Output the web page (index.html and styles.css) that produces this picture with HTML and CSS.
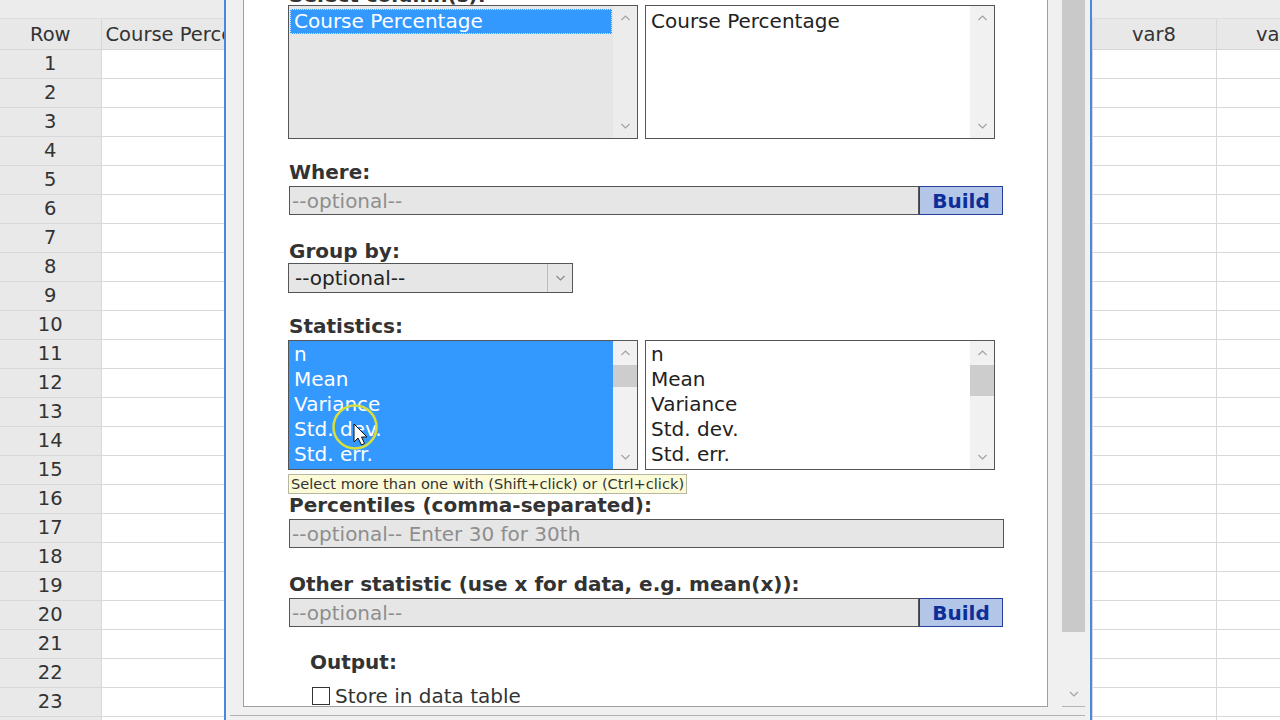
FILE: index.html
```html
<!DOCTYPE html>
<html lang="en">
<head>
    <meta charset="UTF-8">
    <title>Summary statistics</title>
    <link rel="stylesheet" href="styles.css">
</head>
<body>

    <!-- data sheet behind the dialog -->
    <div class="sheet">
        <div class="sheet-bar"></div>
        <table class="grid">
            <colgroup>
                <col class="col-row">
                <col class="col-data">
                <col class="col-hid"><col class="col-hid"><col class="col-hid">
                <col class="col-hid"><col class="col-hid"><col class="col-hid">
                <col class="col-data">
                <col class="col-data">
            </colgroup>
            <thead>
                <tr><th>Row</th><th>Course Percentage</th><th>var2</th><th>var3</th><th>var4</th><th>var5</th><th>var6</th><th>var7</th><th>var8</th><th>var9</th></tr>
            </thead>
            <tbody>
                <tr><th>1</th><td></td><td></td><td></td><td></td><td></td><td></td><td></td><td></td><td></td></tr>
                <tr><th>2</th><td></td><td></td><td></td><td></td><td></td><td></td><td></td><td></td><td></td></tr>
                <tr><th>3</th><td></td><td></td><td></td><td></td><td></td><td></td><td></td><td></td><td></td></tr>
                <tr><th>4</th><td></td><td></td><td></td><td></td><td></td><td></td><td></td><td></td><td></td></tr>
                <tr><th>5</th><td></td><td></td><td></td><td></td><td></td><td></td><td></td><td></td><td></td></tr>
                <tr><th>6</th><td></td><td></td><td></td><td></td><td></td><td></td><td></td><td></td><td></td></tr>
                <tr><th>7</th><td></td><td></td><td></td><td></td><td></td><td></td><td></td><td></td><td></td></tr>
                <tr><th>8</th><td></td><td></td><td></td><td></td><td></td><td></td><td></td><td></td><td></td></tr>
                <tr><th>9</th><td></td><td></td><td></td><td></td><td></td><td></td><td></td><td></td><td></td></tr>
                <tr><th>10</th><td></td><td></td><td></td><td></td><td></td><td></td><td></td><td></td><td></td></tr>
                <tr><th>11</th><td></td><td></td><td></td><td></td><td></td><td></td><td></td><td></td><td></td></tr>
                <tr><th>12</th><td></td><td></td><td></td><td></td><td></td><td></td><td></td><td></td><td></td></tr>
                <tr><th>13</th><td></td><td></td><td></td><td></td><td></td><td></td><td></td><td></td><td></td></tr>
                <tr><th>14</th><td></td><td></td><td></td><td></td><td></td><td></td><td></td><td></td><td></td></tr>
                <tr><th>15</th><td></td><td></td><td></td><td></td><td></td><td></td><td></td><td></td><td></td></tr>
                <tr><th>16</th><td></td><td></td><td></td><td></td><td></td><td></td><td></td><td></td><td></td></tr>
                <tr><th>17</th><td></td><td></td><td></td><td></td><td></td><td></td><td></td><td></td><td></td></tr>
                <tr><th>18</th><td></td><td></td><td></td><td></td><td></td><td></td><td></td><td></td><td></td></tr>
                <tr><th>19</th><td></td><td></td><td></td><td></td><td></td><td></td><td></td><td></td><td></td></tr>
                <tr><th>20</th><td></td><td></td><td></td><td></td><td></td><td></td><td></td><td></td><td></td></tr>
                <tr><th>21</th><td></td><td></td><td></td><td></td><td></td><td></td><td></td><td></td><td></td></tr>
                <tr><th>22</th><td></td><td></td><td></td><td></td><td></td><td></td><td></td><td></td><td></td></tr>
                <tr><th>23</th><td></td><td></td><td></td><td></td><td></td><td></td><td></td><td></td><td></td></tr>
                <tr><th>24</th><td></td><td></td><td></td><td></td><td></td><td></td><td></td><td></td><td></td></tr>
            </tbody>
        </table>
    </div>

    <!-- Summary statistics dialog (scrolled down a bit) -->
    <div class="dialog">
        <div class="dialog-body">
            <div class="panel">
                <div class="form">

                    <div class="field field-first">
                        <div class="label">Select column(s):</div>
                        <div class="list-pair">
                            <div class="listbox listbox-off">
                                <div class="list-items list-pad">
                                    <div class="opt opt-sel opt-focus">Course Percentage</div>
                                </div>
                                <div class="list-scroll">
                                    <div class="scroll-btn"><svg width="9" height="6" viewBox="0 0 9 6"><polyline points="0.5,5 4.5,1 8.5,5"/></svg></div>
                                    <div class="scroll-fill"></div>
                                    <div class="scroll-btn"><svg width="9" height="6" viewBox="0 0 9 6"><polyline points="0.5,1 4.5,5 8.5,1"/></svg></div>
                                </div>
                            </div>
                            <div class="listbox">
                                <div class="list-items list-pad">
                                    <div class="opt">Course Percentage</div>
                                </div>
                                <div class="list-scroll">
                                    <div class="scroll-btn"><svg width="9" height="6" viewBox="0 0 9 6"><polyline points="0.5,5 4.5,1 8.5,5"/></svg></div>
                                    <div class="scroll-fill"></div>
                                    <div class="scroll-btn"><svg width="9" height="6" viewBox="0 0 9 6"><polyline points="0.5,1 4.5,5 8.5,1"/></svg></div>
                                </div>
                            </div>
                        </div>
                    </div>

                    <div class="field">
                        <div class="label">Where:</div>
                        <div class="input-row">
                            <input class="input input-short" placeholder="--optional--">
                            <button class="build">Build</button>
                        </div>
                    </div>

                    <div class="field field-group">
                        <div class="label">Group by:</div>
                        <div class="select">
                            <span class="select-text">--optional--</span>
                            <span class="select-arrow"><svg width="9" height="6" viewBox="0 0 9 6"><polyline points="0.5,1 4.5,5 8.5,1"/></svg></span>
                        </div>
                    </div>

                    <div class="field field-stats">
                        <div class="label">Statistics:</div>
                        <div class="list-pair">
                            <div class="listbox listbox-stats listbox-sel">
                                <div class="list-items">
                                    <div class="opt">n</div>
                                    <div class="opt">Mean</div>
                                    <div class="opt">Variance</div>
                                    <div class="opt">Std. dev.</div>
                                    <div class="opt">Std. err.</div>
                                    <div class="opt">Median</div>
                                    <div class="opt">Range</div>
                                </div>
                                <div class="list-scroll">
                                    <div class="scroll-btn"><svg width="9" height="6" viewBox="0 0 9 6"><polyline points="0.5,5 4.5,1 8.5,5"/></svg></div>
                                    <div class="scroll-thumb"></div>
                                    <div class="scroll-fill"></div>
                                    <div class="scroll-btn"><svg width="9" height="6" viewBox="0 0 9 6"><polyline points="0.5,1 4.5,5 8.5,1"/></svg></div>
                                </div>
                            </div>
                            <div class="listbox listbox-stats">
                                <div class="list-items">
                                    <div class="opt">n</div>
                                    <div class="opt">Mean</div>
                                    <div class="opt">Variance</div>
                                    <div class="opt">Std. dev.</div>
                                    <div class="opt">Std. err.</div>
                                    <div class="opt">Median</div>
                                    <div class="opt">Range</div>
                                </div>
                                <div class="list-scroll">
                                    <div class="scroll-btn"><svg width="9" height="6" viewBox="0 0 9 6"><polyline points="0.5,5 4.5,1 8.5,5"/></svg></div>
                                    <div class="scroll-thumb scroll-thumb-tall"></div>
                                    <div class="scroll-fill"></div>
                                    <div class="scroll-btn"><svg width="9" height="6" viewBox="0 0 9 6"><polyline points="0.5,1 4.5,5 8.5,1"/></svg></div>
                                </div>
                            </div>
                        </div>
                        <div class="tooltip">Select more than one with (Shift+click) or (Ctrl+click)</div>
                        <!-- screen recorder click ring + pointer -->
                        <svg class="pointer" width="52" height="52" viewBox="0 0 52 52">
                            <circle cx="24" cy="24" r="21.5" fill="none" stroke="#d6df3c" stroke-width="2.5"/>
                            <path d="M23 21 L23 39 L27 35 L30.5 42 L33.5 40.5 L30.5 34 L36 34 Z" fill="#fff" stroke="#111" stroke-width="1"/>
                        </svg>
                    </div>

                    <div class="field field-pct">
                        <div class="label">Percentiles (comma-separated):</div>
                        <input class="input input-full" placeholder="--optional-- Enter 30 for 30th">
                    </div>

                    <div class="field field-after-input">
                        <div class="label">Other statistic (use x for data, e.g. mean(x)):</div>
                        <div class="input-row">
                            <input class="input input-short" placeholder="--optional--">
                            <button class="build">Build</button>
                        </div>
                    </div>

                    <div class="output">
                        <div class="label">Output:</div>
                        <label class="check"><span class="check-box"></span>Store in data table</label>
                    </div>

                </div>
            </div>
            <div class="dialog-scroll">
                <div class="dialog-thumb"></div>
                <div class="scroll-fill"></div>
                <div class="scroll-btn dialog-down"><svg width="10" height="6" viewBox="0 0 10 6"><polyline points="1,1 5,5 9,1"/></svg></div>
            </div>
        </div>
        <div class="dialog-foot"></div>
    </div>

</body>
</html>
```

FILE: styles.css
```css
* {
    box-sizing: border-box;
}
body {
    margin: 0;
    width: 1280px;
    height: 720px;
    overflow: hidden;
    position: relative;
    background: #fff;
    color: #333;
    font-family: "DejaVu Sans", Verdana, sans-serif;
}

/* sheet */
.sheet {
    height: 720px;
    overflow: hidden;
}
.sheet-bar {
    height: 19px;
    background: #ececec;
    border-bottom: 1px solid #dedede;
}
.grid {
    border-collapse: collapse;
    table-layout: fixed;
    width: 1340px;
    font-size: 19.5px;
}
.col-row { width: 101px; }
.col-data { width: 124px; }
.col-hid { width: 144.5px; }
.grid th,
.grid td {
    height: 29px;
    padding: 0 4px;
    border: 1px solid #d8d8d8;
    border-top: none;
    border-left: none;
    white-space: nowrap;
    overflow: hidden;
    text-align: center;
    font-weight: normal;
    color: #333;
}
.grid thead th {
    height: 30px;
    background: #e8e8e8;
    border-bottom-color: #d6d6d6;
    padding-top: 1px;
}
.grid tbody th {
    background: #e9e9e9;
}

/* dialog */
.dialog {
    position: absolute;
    left: 224px;
    top: 0;
    width: 868px;
    height: 720px;
    background: #f0f0f0;
    border-left: 2px solid #4a88e0;
    border-right: 2px solid #4a88e0;
}
.dialog-body {
    display: flex;
    height: 707px;
    padding-left: 17px;
}
.panel {
    width: 805px;
    background: #fff;
    border: 1px solid #9f9f9f;
    border-top: none;
    overflow: hidden;
}
.dialog-scroll {
    width: 23px;
    margin-left: 14px;
    display: flex;
    flex-direction: column;
    border-bottom: 1px solid #b4b4b4;
}
.dialog-thumb {
    height: 632px;
    background: #c9c9c9;
}
.dialog-down {
    height: 28px;
}
.dialog-down polyline {
    stroke: #555;
    stroke-width: 1.6;
}
.dialog-foot {
    margin: 8px 5px 0 4px;
    border-top: 1px solid #b0b0b0;
}

/* form */
.form {
    padding-left: 45px;
    margin-top: -17px;
}
.field {
    margin-top: 21px;
}
.field-first {
    margin-top: 0;
}
.field-group {
    margin-top: 24px;
}
.field-pct {
    margin-top: 23px;
}
.field-after-input {
    margin-top: 24px;
}
.label {
    font-size: 20px;
    font-weight: bold;
    line-height: 24px;
    margin-bottom: 2px;
    color: #333;
}
.field-first .label {
    margin-bottom: -2px;
}
.field-group .label {
    margin-bottom: 0;
}

/* list boxes */
.list-pair {
    display: flex;
    gap: 7px;
    margin-left: -1px;
}
.listbox {
    display: flex;
    width: 350px;
    height: 134px;
    border: 1px solid #555;
    background: #fff;
    font-size: 20px;
    color: #222;
}
.listbox-off {
    background: #e6e6e6;
}
.listbox-stats {
    height: 130px;
}
.listbox-stats .list-items {
    padding-top: 1px;
}
.listbox-sel .list-items {
    background: #3399ff;
    color: #fff;
}
.list-items {
    flex: 1;
    overflow: hidden;
    padding: 0 1px;
}
.list-pad {
    padding-top: 3px;
}
.opt {
    height: 25px;
    line-height: 25px;
    padding-left: 4px;
    white-space: nowrap;
}
.opt-sel {
    background: #3399ff;
    color: #fff;
}
.opt-focus {
    outline: 1px dotted #cfe6ff;
    outline-offset: -1px;
}
.list-scroll {
    width: 24px;
    display: flex;
    flex-direction: column;
    background: #f1f1f1;
}
.listbox-off .list-scroll {
    background: #ececec;
}
.scroll-btn {
    height: 24px;
    display: flex;
    align-items: center;
    justify-content: center;
}
.scroll-btn polyline {
    fill: none;
    stroke: #a3a3a3;
    stroke-width: 1.2;
}
.scroll-fill {
    flex: 1;
}
.scroll-thumb {
    height: 22px;
    background: #cdcdcd;
}
.scroll-thumb-tall {
    height: 31px;
}

/* inputs */
.input-row {
    display: flex;
}
.input {
    height: 29px;
    border: 1px solid #555;
    background: #e6e6e6;
    font-family: inherit;
    font-size: 20px;
    padding: 0 2px;
    color: #222;
}
.input::placeholder {
    color: #8e8e8e;
}
.input-short {
    width: 630px;
}
.input-full {
    width: 715px;
}
.build {
    width: 84px;
    height: 29px;
    border: 1px solid #23409e;
    background: #b3c6e7;
    color: #0c2e98;
    font-family: inherit;
    font-size: 20px;
    font-weight: bold;
    padding: 0;
}
.select {
    display: flex;
    width: 285px;
    height: 30px;
    margin-left: -1px;
    border: 1px solid #555;
    background: #e6e6e6;
    font-size: 20px;
    color: #222;
}
.select-text {
    flex: 1;
    line-height: 28px;
    padding-left: 6px;
}
.select-arrow {
    width: 25px;
    border-left: 1px solid #bcbcbc;
    display: flex;
    align-items: center;
    justify-content: center;
}
.select-arrow polyline {
    fill: none;
    stroke: #888;
    stroke-width: 1.2;
}

/* statistics extras */
.field-stats {
    position: relative;
}
.tooltip {
    position: absolute;
    left: -1px;
    top: 160px;
    height: 20px;
    padding: 0 2px;
    border: 1px solid #b8b8a0;
    background: #fbfbd8;
    font-size: 14.6px;
    line-height: 18px;
    color: #333;
    white-space: nowrap;
}
.pointer {
    position: absolute;
    left: 42px;
    top: 89px;
}

/* output */
.output {
    margin-top: 23px;
    padding-left: 21px;
}
.output .label {
    margin-bottom: 10px;
}
.check {
    display: flex;
    align-items: center;
    font-size: 20px;
    color: #333;
}
.check-box {
    width: 18px;
    height: 18px;
    margin: 0 5px 0 2px;
    border: 1.5px solid #333;
    background: #fff;
}
```
